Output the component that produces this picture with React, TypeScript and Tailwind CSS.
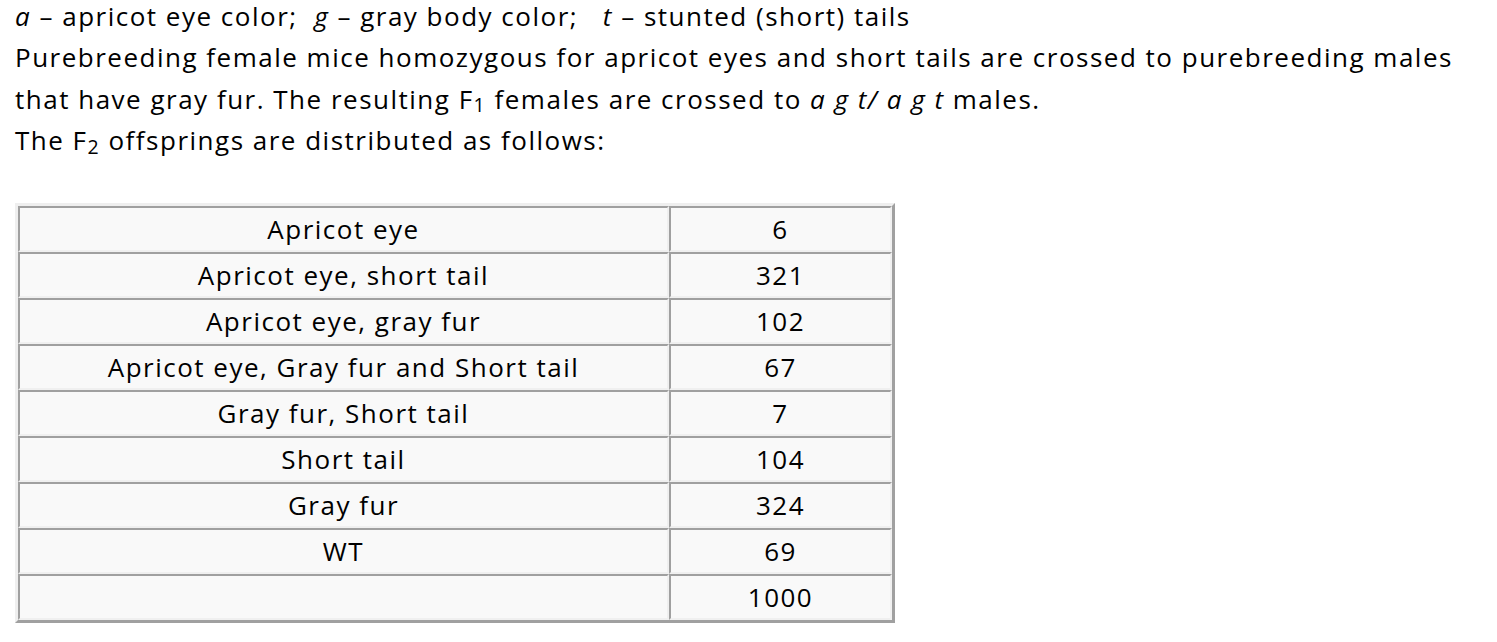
const rows = [
  { trait: 'Apricot eye', count: '6' },
  { trait: 'Apricot eye, short tail', count: '321' },
  { trait: 'Apricot eye, gray fur', count: '102' },
  { trait: 'Apricot eye, Gray fur and Short tail', count: '67' },
  { trait: 'Gray fur, Short tail', count: '7' },
  { trait: 'Short tail', count: '104' },
  { trait: 'Gray fur', count: '324' },
  { trait: 'WT', count: '69' },
  { trait: '', count: '1000' },
];

const cell =
  'h-[46px] p-0 text-center align-middle bg-[#f9f9f9] border-t-2 border-l-2 border-b-2 border-r-2 border-t-[#a0a0a0] border-l-[#a0a0a0] border-b-[#f0f0f0] border-r-[#f0f0f0]';

export default function App() {
  return (
    <div className="min-h-screen bg-white text-black font-['Open_Sans','Lato',sans-serif] text-[26px] tracking-[1.5px]">
      <div className="pl-[15px] -mt-[4px] leading-[41.3px]">
        <div>
          <i>a</i> – apricot eye color;&nbsp; <i>g</i> – gray body color;&nbsp;&nbsp; <i>t</i> – stunted (short) tails
        </div>
        <div>
          Purebreeding female mice homozygous for apricot eyes and short tails are crossed to purebreeding males
        </div>
        <div>
          that have gray fur. The resulting F<sub className="text-[0.75em] align-baseline relative top-[0.2em]">1</sub> females are crossed to <i>a g t/ a g t</i> males.
        </div>
        <div>
          The F<sub className="text-[0.75em] align-baseline relative top-[0.2em]">2</sub> offsprings are distributed as follows:
        </div>
      </div>

      <table className="ml-[15px] mt-[42px] border-separate border-spacing-0 border-t-[3px] border-l-[3px] border-b-[3px] border-r-[3px] border-t-[#efefef] border-l-[#efefef] border-b-[#a0a0a0] border-r-[#a0a0a0] bg-[#efefef]">
        <tbody>
          {rows.map((r, i) => (
            <tr key={i}>
              <td className={`${cell} w-[651px]`}>{r.trait}</td>
              <td className={`${cell} w-[223px]`}>{r.count}</td>
            </tr>
          ))}
        </tbody>
      </table>
    </div>
  );
}
